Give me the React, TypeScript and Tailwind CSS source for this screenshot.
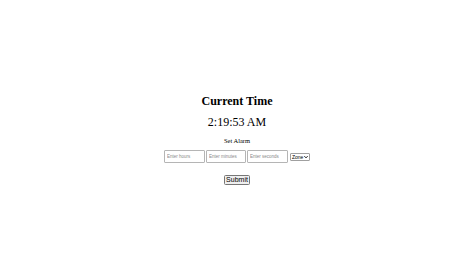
import React, { useState } from "react";

function App() {
  const [zone, setZone] = useState("");

  return (
    <div className="w-[474px] h-[266px] bg-white flex flex-col items-center pt-[94px] text-black">
      {/* Clock */}
      <h1 className="font-['Liberation_Serif',serif] font-bold text-[12px] leading-[14px]">
        Current Time
      </h1>
      <div className="mt-[7px] font-['Liberation_Serif',serif] text-[12px] leading-[14px]">
        2:19:53 AM
      </div>

      {/* Alarm form */}
      <div className="mt-[8px] font-['Liberation_Serif',serif] text-[6.5px] leading-[8px]">
        Set Alarm
      </div>
      <div className="mt-[5px] flex items-center gap-[1px]">
        <input
          type="text"
          placeholder="Enter hours"
          className="w-[41px] h-[13px] border border-[#b5b5b5] rounded-[1px] px-[2px] text-[4.5px] font-['Liberation_Sans',sans-serif] placeholder:text-[#8a8a8a]"
        />
        <input
          type="text"
          placeholder="Enter minutes"
          className="w-[40px] h-[13px] border border-[#b5b5b5] rounded-[1px] px-[2px] text-[4.5px] font-['Liberation_Sans',sans-serif] placeholder:text-[#8a8a8a]"
        />
        <input
          type="text"
          placeholder="Enter seconds"
          className="w-[41px] h-[13px] border border-[#b5b5b5] rounded-[1px] px-[2px] text-[4.5px] font-['Liberation_Sans',sans-serif] placeholder:text-[#8a8a8a]"
        />
        <div className="ml-[1px] w-[20px] flex items-center justify-between h-[8px] border border-[#a0a0a0] rounded-[1px] pl-[1px] pr-[1.5px] font-['Liberation_Sans',sans-serif] text-[5px] leading-[6px]">
          <span>{zone || "Zone"}</span>
          <svg width="4" height="4" viewBox="0 0 10 8">
            <path d="M1 2 L5 6 L9 2" stroke="#000" strokeWidth="2.4" fill="none" />
          </svg>
        </div>
      </div>
      <button
        onClick={() => setZone("")}
        className="mt-[12px] w-[26px] h-[10px] bg-[#efefef] border border-[#767676] rounded-[1.5px] font-['Liberation_Sans',sans-serif] text-[7px] leading-[8px] text-black"
      >
        Submit
      </button>
    </div>
  );
}

export default App;
